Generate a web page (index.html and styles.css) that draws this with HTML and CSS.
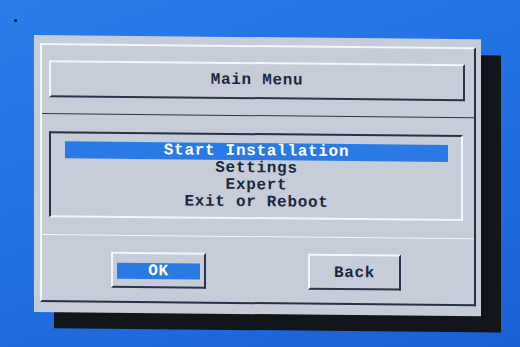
FILE: index.html
```html
<!DOCTYPE html>
<html lang="en">
<head>
	<meta charset="UTF-8">
	<title>Main Menu</title>
	<link rel="stylesheet" href="styles.css">
</head>
<body>
	<div class="screen">
		<div class="speck"></div>
		<div class="dialog">
			<div class="frame">
				<div class="head">
					<div class="title">Main Menu</div>
				</div>
				<div class="sep dark"></div>
				<div class="body">
					<ul class="menu">
						<li class="on">Start Installation</li>
						<li>Settings</li>
						<li>Expert</li>
						<li>Exit or Reboot</li>
					</ul>
				</div>
				<div class="sep light"></div>
				<div class="foot">
					<div class="btn"><span class="label on">OK</span></div>
					<div class="btn"><span class="label">Back</span></div>
				</div>
			</div>
		</div>
	</div>
</body>
</html>
```

FILE: styles.css
```css
html *{
	padding:0;
	margin:0;
}
body{
	width:520px;
	height:347px;
	overflow:hidden;
	background:#1f6fe0;
	font-family:"Liberation Mono", "DejaVu Sans Mono", monospace;
	font-weight:bold;
	font-size:16px;
	letter-spacing:0.7px;
	color:#1c2740;
}
.screen{
	height:347px;
	background:linear-gradient(160deg, #2b7de9 0%, #2170e2 50%, #1a60d4 100%);
	overflow:hidden;
}
.speck{
	width:3px;
	height:3px;
	background:#0b0f1a;
	border-radius:50%;
	margin:19px 0 0 14px;
}
.dialog{
	width:447px;
	height:277px;
	box-sizing:border-box;
	margin:13px 0 0 34px;
	padding:8px 5px 10px 6px;
	background:#c6cdd8;
	box-shadow:20px 16px 0 #121519;
	transform:skewY(0.55deg);
	transform-origin:left top;
}
.frame{
	height:259px;
	box-sizing:border-box;
	border:2px solid;
	border-color:#f3f6fa #27314a #27314a #f3f6fa;
	display:flex;
	flex-direction:column;
}
.head{
	padding:15px 9px 16px 7px;
}
.title{
	height:37px;
	box-sizing:border-box;
	border:2px solid;
	border-color:#f3f6fa #2a344c #2a344c #f3f6fa;
	line-height:33px;
	text-align:center;
}
.sep{
	height:1px;
}
.sep.dark{
	background:#2a344c;
}
.sep.light{
	background:#f3f6fa;
}
.body{
	padding:17px 11px 17px 7px;
}
.menu{
	list-style:none;
	height:86px;
	box-sizing:border-box;
	border:2px solid;
	border-color:#27314a #f3f6fa #f3f6fa #27314a;
	padding:8px 13px 6px 14px;
}
.menu li{
	height:17px;
	line-height:17px;
	text-align:center;
}
.menu li.on{
	background:#2a7ae6;
	color:#fff;
}
.foot{
	display:flex;
	gap:102px;
	padding:16px 0 13px 69px;
}
.btn{
	width:95px;
	height:36px;
	box-sizing:border-box;
	border:2px solid;
	border-color:#f3f6fa #2a344c #2a344c #f3f6fa;
	padding:9px 4px 7px 4px;
}
.btn + .btn{
	width:93px;
}
.label{
	display:block;
	height:16px;
	line-height:16px;
	text-align:center;
}
.label.on{
	background:#2a7ae6;
	color:#fff;
}
```
